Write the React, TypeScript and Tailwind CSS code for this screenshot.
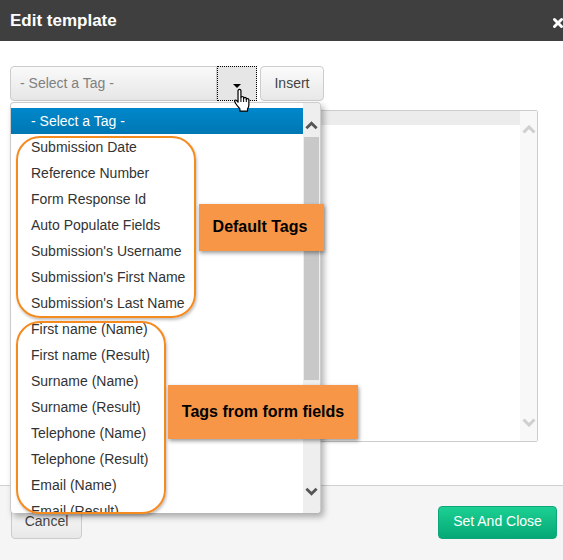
import { X } from 'lucide-react';

const font = { fontFamily: '"Liberation Sans", Arial, sans-serif' };

const tags = [
  'Submission Date',
  'Reference Number',
  'Form Response Id',
  'Auto Populate Fields',
  "Submission's Username",
  "Submission's First Name",
  "Submission's Last Name",
  'First name (Name)',
  'First name (Result)',
  'Surname (Name)',
  'Surname (Result)',
  'Telephone (Name)',
  'Telephone (Result)',
  'Email (Name)',
  'Email (Result)',
];

function Chevron({ up, color, className }: { up?: boolean; color: string; className: string }) {
  return (
    <svg viewBox="0 0 14 9" className={className} fill="none">
      <polyline points={up ? '1.5,7.5 7,2 12.5,7.5' : '1.5,1.5 7,7 12.5,1.5'} stroke={color} strokeWidth="3" />
    </svg>
  );
}

function Hand() {
  return (
    <svg viewBox="0 0 17 22" className="absolute left-[233px] top-[88px] h-[25px] w-[19px]">
      <path
        d="M4.5 2.2c0-1.6 2.6-1.6 2.6 0v6.2c0-1.3 2.4-1.3 2.4 0v.8c0-1.2 2.4-1.2 2.4 0v.9c0-1.1 2.3-1 2.3.3v4.6c0 1.8-.6 2.7-1.2 3.7v1.8H6.2v-1.8c-.8-1.4-2.2-2.6-3.6-4.8-.9-1.5-1.6-2.4-1.1-3 .6-.7 1.9-.2 3 1.6z"
        fill="#fff"
        stroke="#000"
        strokeWidth="1.1"
        strokeLinejoin="round"
      />
      <path d="M7.1 8.4v4M9.5 9.2v3.2M11.9 10.1v2.3" stroke="#000" strokeWidth="0.9" />
    </svg>
  );
}

export default function App() {
  return (
    <div style={font} className="relative flex h-[560px] w-[563px] flex-col overflow-hidden bg-white text-[14px] text-[#333]">
      <div className="relative flex h-[41px] items-center bg-[#3f3f3f] pl-[10px] text-[17px] font-bold text-white">
        Edit template
        <X size={14} strokeWidth={5} color="#fff" className="absolute left-[551px] top-[16px]" />
      </div>

      <div className="flex-1 pl-[10px] pt-[25px]">
        <div className="flex h-[35px] items-stretch">
          <div className="flex w-[207px] items-center rounded-l-[4px] border border-[#ccc] bg-gradient-to-b from-[#fafafa] to-[#e6e6e6] pl-[9px] text-[#808080]">
            - Select a Tag -
          </div>
          <div className="flex w-[40px] items-end justify-center border border-dotted border-black bg-[#e6e6e6] pb-[12px]">
            <div className="h-0 w-0 border-x-[4px] border-t-[4px] border-x-transparent border-t-black" />
          </div>
          <button className="ml-[3px] w-[64px] rounded-[4px] border border-[#ccc] bg-gradient-to-b from-[#fbfbfb] to-[#e8e8e8] text-[#444]">
            Insert
          </button>
        </div>

        <div className="mt-[9px] flex h-[332px] w-[528px] justify-end rounded-[2px] border border-[#ccc]">
          <div className="h-[14px] flex-1 bg-[#ececec]" />
          <div className="flex w-[17px] flex-col items-center justify-between bg-[#f8f8f8] py-[14px]">
            <Chevron up color="#cfcfcf" className="h-[9px] w-[14px]" />
            <Chevron color="#cfcfcf" className="h-[9px] w-[14px]" />
          </div>
        </div>
      </div>

      <div className="flex h-[75px] justify-between border-t border-[#d0d0d0] bg-[#f5f5f5] pl-[11px] pr-[6px] pt-[20px]">
        <button className="h-[33px] w-[71px] rounded-[4px] border border-[#ccc] bg-gradient-to-b from-[#fafafa] to-[#e8e8e8] pb-[2px] text-[#444]">
          Cancel
        </button>
        <button className="h-[33px] w-[119px] rounded-[4px] border border-[#0ea678] bg-gradient-to-b from-[#1bd092] to-[#04a876] pb-[2px] text-white">
          Set And Close
        </button>
      </div>

      {/* open dropdown */}
      <div className="absolute left-[10px] top-[102px] flex h-[411px] w-[311px] overflow-hidden rounded-[4px] border-x border-t border-[#ccc] bg-white shadow-[3px_4px_6px_rgba(0,0,0,0.3)]">
        <div className="flex-1 overflow-hidden pt-[5px]">
          <div className="flex h-[26px] items-center bg-gradient-to-b from-[#0088cc] to-[#0077b3] pl-[20px] text-white">
            - Select a Tag -
          </div>
          {tags.map((t) => (
            <div key={t} className="flex h-[26px] items-center pl-[20px]">
              {t}
            </div>
          ))}
        </div>
        <div className="flex w-[17px] flex-col items-center bg-[#eeeeee] pt-[18px]">
          <Chevron up color="#555" className="h-[9px] w-[13px]" />
          <div className="mt-[7px] h-[243px] w-[15px] bg-[#c8c8c8]" />
          <Chevron color="#555" className="mt-[107px] h-[9px] w-[13px]" />
        </div>
      </div>

      {/* annotations */}
      <div className="absolute left-[16px] top-[136px] h-[182px] w-[180px] rounded-[24px] border-2 border-[#f58a1f] shadow-[1px_2px_3px_rgba(0,0,0,0.25)]" />
      <div className="absolute left-[16px] top-[321px] h-[193px] w-[150px] rounded-[24px] border-2 border-[#f58a1f] shadow-[1px_2px_3px_rgba(0,0,0,0.25)]" />
      <div className="absolute left-[199px] top-[204px] flex h-[47px] w-[125px] items-center justify-center bg-[#f79646] pb-[1px] pr-[3px] text-[16px] font-bold text-black shadow-[1px_2px_4px_rgba(0,0,0,0.4)]">
        Default Tags
      </div>
      <div className="absolute left-[168px] top-[385px] flex h-[54px] w-[190px] items-center justify-center bg-[#f79646] pb-[1px] text-[16px] font-bold text-black shadow-[1px_2px_4px_rgba(0,0,0,0.4)]">
        Tags from form fields
      </div>
      <Hand />
    </div>
  );
}
